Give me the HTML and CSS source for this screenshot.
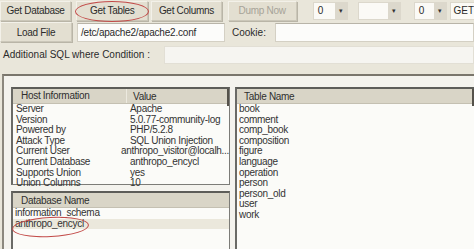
FILE: index.html
```html
<!DOCTYPE html>
<html>
<head>
<meta charset="utf-8">
<link rel="stylesheet" href="styles.css">
</head>
<body>
<div class="toolbar">
  <div class="row r1">
    <div class="btn w72">Get Database</div>
    <div class="btn w73 ml5 ringhost">Get Tables<span class="ring ring-tables"></span></div>
    <div class="btn w71 ml3">Get Columns</div>
    <div class="btn w70 ml6 disabled">Dump Now</div>
    <div class="combo w36 ml16"><span class="cval">0</span><span class="drop">&#9662;</span></div>
    <div class="combo w43 ml10"><span class="cval"></span><span class="drop">&#9662;</span></div>
    <div class="combo w34 ml13"><span class="cval">0</span><span class="drop">&#9662;</span></div>
    <div class="combo method ml3"><span class="cval">GET</span></div>
  </div>
  <div class="row r2">
    <div class="btn w72">Load File</div>
    <div class="input w148 ml5">/etc/apache2/apache2.conf</div>
    <div class="label ml7">Cookie:</div>
    <div class="input grow ml9"></div>
  </div>
  <div class="row r3">
    <div class="label ml3 sqllabel">Additional SQL where Condition :</div>
    <div class="input grow soft"></div>
  </div>
</div>
<div class="panel">
  <div class="leftcol">
    <div class="list hostlist">
      <div class="lhead">
        <span class="c1">Host Information</span><span class="c2">Value</span>
      </div>
      <div class="lrow"><span class="c1">Server</span><span class="c2">Apache</span></div>
      <div class="lrow"><span class="c1">Version</span><span class="c2">5.0.77-community-log</span></div>
      <div class="lrow"><span class="c1">Powered by</span><span class="c2">PHP/5.2.8</span></div>
      <div class="lrow"><span class="c1">Attack Type</span><span class="c2">SQL Union Injection</span></div>
      <div class="lrow"><span class="c1">Current User</span><span class="c2">anthropo_visitor@localh...</span></div>
      <div class="lrow"><span class="c1">Current Database</span><span class="c2">anthropo_encycl</span></div>
      <div class="lrow"><span class="c1">Supports Union</span><span class="c2">yes</span></div>
      <div class="lrow"><span class="c1">Union Columns</span><span class="c2">10</span></div>
      <span class="sbar"></span>
    </div>
    <div class="list dblist">
      <div class="lhead"><span class="c1">Database Name</span></div>
      <div class="lrow"><span class="c1 tight">information_schema</span></div>
      <div class="lrow sel"><span class="c1 tight">anthropo_encycl</span></div>
      <span class="ring ring-db"></span>
    </div>
  </div>
  <div class="list tablelist">
    <div class="lhead"><span class="c1">Table Name</span></div>
    <div class="lrow"><span class="c1 tight">book</span></div>
    <div class="lrow"><span class="c1 tight">comment</span></div>
    <div class="lrow"><span class="c1 tight">comp_book</span></div>
    <div class="lrow"><span class="c1 tight">composition</span></div>
    <div class="lrow"><span class="c1 tight">figure</span></div>
    <div class="lrow"><span class="c1 tight">language</span></div>
    <div class="lrow"><span class="c1 tight">operation</span></div>
    <div class="lrow"><span class="c1 tight">person</span></div>
    <div class="lrow"><span class="c1 tight">person_old</span></div>
    <div class="lrow"><span class="c1 tight">user</span></div>
    <div class="lrow"><span class="c1 tight">work</span></div>
    <span class="sbar"></span>
  </div>
</div>
</body>
</html>
```
FILE: styles.css
```css
html, body {
  margin: 0;
  padding: 0;
  width: 474px;
  height: 249px;
  overflow: hidden;
}
body {
  background: #e9e6da;
  font-family: "Liberation Sans", Arial, sans-serif;
  font-size: 10px;
  color: #2b2b2b;
}
.toolbar {
  display: flex;
  flex-direction: column;
  height: 74px;
}
.row {
  display: flex;
  align-items: center;
  white-space: nowrap;
}
.r1 { height: 21px; }
.r2 { height: 20px; margin-top: 1px; }
.r3 { height: 19px; margin-top: 3px; }

.btn {
  position: relative;
  box-sizing: border-box;
  height: 20px;
  display: flex;
  align-items: center;
  justify-content: center;
  background: #e3dfd1;
  border: 1px solid #cbc7b9;
  border-top-color: #f3f1e9;
  border-left-color: #f3f1e9;
  box-shadow: 1px 1px 0 #b9b5a7;
  color: #2b2b2b;
  letter-spacing: -0.3px;
}
.btn.disabled { color: #a6a398; }
.w72 { width: 72px; }
.w73 { width: 73px; }
.w71 { width: 71px; }
.w70 { width: 70px; }
.w36 { width: 36px; }
.w43 { width: 43px; }
.w34 { width: 34px; }
.w148 { width: 148px; }
.ml3 { margin-left: 3px; }
.ml5 { margin-left: 5px; }
.ml6 { margin-left: 6px; }
.ml7 { margin-left: 7px; }
.ml9 { margin-left: 9px; }
.ml10 { margin-left: 10px; }
.ml13 { margin-left: 13px; }
.ml16 { margin-left: 16px; }
.grow { flex: 1; }

.combo {
  box-sizing: border-box;
  height: 18px;
  display: flex;
  background: #fbfaf6;
  border: 1px solid #dcd8cc;
}
.combo .cval {
  flex: 1;
  padding-left: 4px;
  line-height: 16px;
}
.combo .drop {
  width: 12px;
  background: #dcd8cc;
  color: #333;
  font-size: 7px;
  line-height: 16px;
  text-align: center;
}
.combo.method {
  flex: 1;
  border-right: none;
}
.combo.method .cval { padding-left: 2px; }

.input {
  box-sizing: border-box;
  height: 19px;
  background: #fcfcfa;
  border: 1px solid #d4d0c4;
  border-top-color: #b8b4a8;
  line-height: 17px;
  padding-left: 3px;
  letter-spacing: -0.2px;
}
.input.soft {
  height: 18px;
  background: #f6f5f1;
  border-color: #e2dfd5;
  margin-left: 14px;
}
.label { color: #2b2b2b; }

.ring {
  position: absolute;
  border: 1.5px solid #c24a48;
  border-radius: 50%;
  pointer-events: none;
}
.ring-tables {
  left: -2px;
  top: -1px;
  width: 72px;
  height: 19px;
}

.panel {
  box-sizing: border-box;
  height: 175px;
  margin-left: 2px;
  border-top: 2px solid #7a766c;
  border-left: 2px solid #8c887e;
  background: #f4f3ee;
  padding: 11px 0 0 7px;
  display: flex;
  gap: 5px;
}
.leftcol {
  width: 219px;
  display: flex;
  flex-direction: column;
  gap: 6px;
}
.list {
  position: relative;
  box-sizing: border-box;
  background: #fbfbf8;
  border: 1px solid #7c7c78;
  border-top: 2px solid #5d5d59;
  border-left: 2px solid #6a6a66;
  color: #333;
  letter-spacing: -0.3px;
}
.hostlist { height: 98px; }
.dblist { flex: 1; border-bottom: none; }
.tablelist { flex: 1; border-right: none; border-bottom: none; }

.lhead {
  height: 14px;
  display: flex;
  align-items: center;
  background: #d9d5c7;
  border-bottom: 1px solid #c4c0b2;
  color: #2f2f2f;
}
.lhead .c1 { width: 105px; padding-left: 8px; }
.hostlist .lhead .c1 { border-right: 1px solid #ece9df; height: 14px; line-height: 14px; }
.lhead .c2 { padding-left: 6px; }
.tablelist .lhead .c1 { padding-left: 7px; }

.lrow {
  height: 10.6px;
  line-height: 10.6px;
  display: flex;
  white-space: nowrap;
}
.lrow .c1 { width: 110px; padding-left: 3px; }
.lrow .c2 { padding-left: 4px; }
.lrow .tight { padding-left: 2px; width: auto; }
.lrow.sel { background: #ebe8dc; }

.sbar {
  position: absolute;
  right: 0;
  top: 0;
  width: 2px;
  height: 17px;
  background: #55524b;
}

.ring-db {
  left: -1px;
  top: 24px;
  width: 75px;
  height: 18px;
  transform: rotate(-3deg);
}
```
